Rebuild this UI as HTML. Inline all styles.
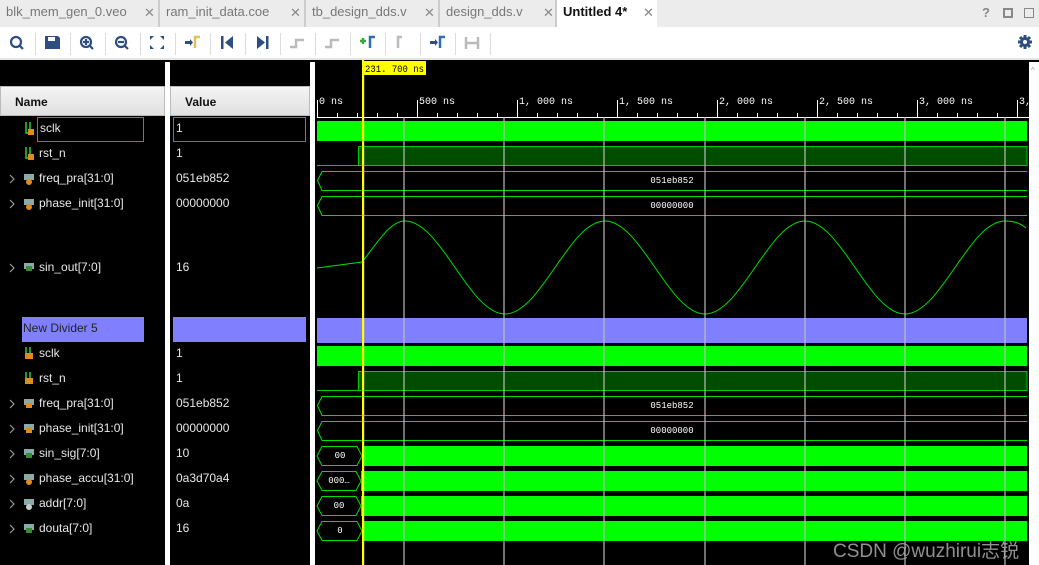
<!DOCTYPE html>
<html><head><meta charset="utf-8"><style>
*{margin:0;padding:0;box-sizing:border-box}
body{width:1039px;height:565px;overflow:hidden;background:#000;position:relative;font-family:"Liberation Sans",sans-serif}
.abs{position:absolute}
.tabs{left:0;top:0;width:1039px;height:27px;background:#ececec}
.tab{position:absolute;top:0;height:27px;font-size:13px;color:#777;padding:4px 0 0 6px}
.tab .x{position:absolute;top:5px;font-size:13px;color:#888}
.tb{left:0;top:27px;width:1039px;height:33px;background:#fff;border-bottom:2px solid #e4e4e4}
.sep{position:absolute;top:6px;width:1px;height:22px;background:#ddd}
.nm{position:absolute;font-size:12px;color:#e8e8e8;white-space:nowrap}
.hdr{position:absolute;top:86px;height:30px;background:linear-gradient(#f4f4f4,#e0e0e0);border:1px solid #bbb;font-size:12px;font-weight:bold;color:#111;padding:8px 0 0 14px}
</style></head><body>
<div class="abs tabs">
 <div class="tab" style="left:0;width:158px">blk_mem_gen_0.veo<span class="x" style="left:144px">✕</span></div>
 <div class="abs" style="left:158px;top:0;width:2px;height:27px;background:#ccc"></div>
 <div class="tab" style="left:160px;width:144px">ram_init_data.coe<span class="x" style="left:130px">✕</span></div>
 <div class="abs" style="left:304px;top:0;width:2px;height:27px;background:#ccc"></div>
 <div class="tab" style="left:306px;width:132px">tb_design_dds.v<span class="x" style="left:118px">✕</span></div>
 <div class="abs" style="left:438px;top:0;width:2px;height:27px;background:#ccc"></div>
 <div class="tab" style="left:440px;width:117px">design_dds.v<span class="x" style="left:103px">✕</span></div>
 <div class="abs" style="left:555px;top:0;width:2px;height:27px;background:#ccc"></div>
 <div class="tab" style="left:557px;width:100px;background:#fff;color:#111;font-weight:bold">Untitled 4*<span class="x" style="left:86px;font-weight:normal">✕</span></div>
 <div class="abs" style="left:982px;top:5px;font-size:13px;color:#888;font-weight:bold">?</div>
 <div class="abs" style="left:1003px;top:8px;width:10px;height:10px;border:2px solid #888"></div>
 <div class="abs" style="left:1024px;top:8px;width:10px;height:10px;border:1.5px solid #888"></div>
</div>
<div class="abs tb">
 <svg width="1039" height="33" style="position:absolute;left:0;top:0">
  <g fill="none" stroke="#2e4d80" stroke-width="2.2">
   <circle cx="16" cy="15" r="5"/><line x1="20" y1="19" x2="23" y2="22"/>
   <circle cx="86" cy="15" r="5"/><line x1="90" y1="19" x2="93" y2="22"/><line x1="83" y1="15" x2="89" y2="15"/><line x1="86" y1="12" x2="86" y2="18"/>
   <circle cx="121" cy="15" r="5"/><line x1="125" y1="19" x2="128" y2="22"/><line x1="118" y1="15" x2="124" y2="15"/>
  </g>
  <path d="M45 9h13l2 2v11h-15z" fill="#2e4d80"/><rect x="48" y="10" width="7" height="4" fill="#fff"/>
  <g fill="#2e4d80"><path d="M150 9h4l-4 4z"/><path d="M164 9h-4l4 4z"/><path d="M150 22h4l-4-4z"/><path d="M164 22h-4l4-4z"/></g>
  <path d="M185 14h6v3h-6z M190 12l3 3.5-3 3.5z" fill="#2e4d80"/><path d="M195 21v-11h5" stroke="#e0c060" stroke-width="2.5" fill="none"/>
  <rect x="221" y="9" width="2.5" height="13" fill="#2e4d80"/><path d="M233 9v13l-8-6.5z" fill="#2e4d80"/>
  <path d="M257 9v13l8-6.5z" fill="#2e4d80"/><rect x="266" y="9" width="2.5" height="13" fill="#2e4d80"/>
  <g stroke="#bbb" stroke-width="2.5" fill="none"><path d="M290 20h6v-7h8"/><path d="M325 20h6v-7h8"/><path d="M398 21v-11h4"/><path d="M466 10v12M478 10v12M466 16h12"/></g>
  <path d="M360 14h6M363 11v6" stroke="#3a3" stroke-width="2.4"/><path d="M370 21v-11h5" stroke="#2e6fb0" stroke-width="2.5" fill="none"/>
  <path d="M430 14h6v3h-6z M435 12l3 3.5-3 3.5z" fill="#2e4d80"/><path d="M440 21v-11h5" stroke="#2e6fb0" stroke-width="2.5" fill="none"/>
  <g stroke="#2e4d80" stroke-width="3"><line x1="1025" y1="8" x2="1025" y2="22"/><line x1="1018" y1="15" x2="1032" y2="15"/><line x1="1020" y1="10" x2="1030" y2="20"/><line x1="1030" y1="10" x2="1020" y2="20"/></g>
  <circle cx="1025" cy="15" r="5" fill="#2e4d80"/><circle cx="1025" cy="15" r="2" fill="#fff"/>
 </svg>
 <div class="sep" style="left:35px"></div><div class="sep" style="left:70px"></div><div class="sep" style="left:105px"></div><div class="sep" style="left:140px"></div><div class="sep" style="left:175px"></div><div class="sep" style="left:210px"></div><div class="sep" style="left:245px"></div><div class="sep" style="left:280px"></div><div class="sep" style="left:315px"></div><div class="sep" style="left:350px"></div><div class="sep" style="left:385px"></div><div class="sep" style="left:420px"></div><div class="sep" style="left:455px"></div><div class="sep" style="left:490px"></div>
</div>
<div class="abs" style="left:165px;top:62px;width:5px;height:503px;background:#fff"></div>
<div class="abs" style="left:310px;top:62px;width:5px;height:503px;background:#fff"></div>
<div class="abs" style="left:1029px;top:62px;width:10px;height:503px;background:#fff"></div>
<div class="abs" style="left:1031px;top:66px;font-size:8px;color:#999">^</div>
<div class="hdr" style="left:0;width:165px">Name</div>
<div class="hdr" style="left:170px;width:140px">Value</div>
<div class="abs" style="left:37px;top:117px;width:107px;height:25px;border:1px solid #4a7fae"></div>
<div class="abs" style="left:173px;top:117px;width:133px;height:25px;border:1px solid #4a7fae"></div>
<div class="abs" style="left:22px;top:317px;width:122px;height:25px;background:#8080ff"></div>
<div class="abs" style="left:173px;top:317px;width:133px;height:25px;background:#8080ff"></div>
<svg width="165" height="565" style="position:absolute;left:0;top:0">
 <g fill="none" stroke="#999" stroke-width="1.2">
  <path d="M10 175l4 4-4 4M10 200l4 4-4 4M10 264l4 4-4 4M10 400l4 4-4 4M10 425l4 4-4 4M10 450l4 4-4 4M10 475l4 4-4 4M10 500l4 4-4 4M10 525l4 4-4 4"/>
 </g>
 <g>
  <path d="M26 122v11h3M30 122v11" stroke="#3c3" stroke-width="1.5" fill="none"/><rect x="28" y="129" width="6" height="6" fill="#e08a20"/>
  <path d="M26 147v11h3M30 147v11" stroke="#3c3" stroke-width="1.5" fill="none"/><rect x="28" y="154" width="6" height="6" fill="#e08a20"/>
  <path d="M26 347v11h3M30 347v11" stroke="#3c3" stroke-width="1.5" fill="none"/><rect x="25" y="353" width="8" height="6" fill="#e08a20"/>
  <path d="M26 372v11h3M30 372v11" stroke="#3c3" stroke-width="1.5" fill="none"/><rect x="25" y="378" width="8" height="6" fill="#e08a20"/>
 </g>
 <g fill="#8aa">
  <rect x="24" y="174" width="10" height="6"/><rect x="24" y="199" width="10" height="6"/><rect x="24" y="263" width="10" height="6"/>
  <rect x="24" y="399" width="10" height="6"/><rect x="24" y="424" width="10" height="6"/><rect x="24" y="449" width="10" height="6"/><rect x="24" y="474" width="10" height="6"/><rect x="24" y="499" width="10" height="6"/><rect x="24" y="524" width="10" height="6"/>
 </g>
 <g fill="#e08a20"><circle cx="29" cy="182" r="3"/><circle cx="29" cy="207" r="3"/><rect x="26" y="403" width="6" height="5"/><rect x="26" y="428" width="6" height="5"/><circle cx="29" cy="482" r="3"/></g>
 <g fill="#3a8a3a"><rect x="26" y="266" width="6" height="5"/><rect x="26" y="453" width="6" height="5"/><rect x="26" y="528" width="6" height="5"/></g>
 <circle cx="29" cy="507" r="3" fill="#ccc"/>
</svg>
<div class="nm" style="left:40px;top:121px">sclk</div>
<div class="nm" style="left:39px;top:146px">rst_n</div>
<div class="nm" style="left:39px;top:171px">freq_pra[31:0]</div>
<div class="nm" style="left:39px;top:196px">phase_init[31:0]</div>
<div class="nm" style="left:39px;top:260px">sin_out[7:0]</div>
<div class="nm" style="left:23px;top:321px;color:#222">New Divider 5</div>
<div class="nm" style="left:39px;top:346px">sclk</div>
<div class="nm" style="left:39px;top:371px">rst_n</div>
<div class="nm" style="left:39px;top:396px">freq_pra[31:0]</div>
<div class="nm" style="left:39px;top:421px">phase_init[31:0]</div>
<div class="nm" style="left:39px;top:446px">sin_sig[7:0]</div>
<div class="nm" style="left:39px;top:471px">phase_accu[31:0]</div>
<div class="nm" style="left:39px;top:496px">addr[7:0]</div>
<div class="nm" style="left:39px;top:521px">douta[7:0]</div>
<div class="nm" style="left:176px;top:121px">1</div>
<div class="nm" style="left:176px;top:146px">1</div>
<div class="nm" style="left:176px;top:171px">051eb852</div>
<div class="nm" style="left:176px;top:196px">00000000</div>
<div class="nm" style="left:176px;top:260px">16</div>
<div class="nm" style="left:176px;top:346px">1</div>
<div class="nm" style="left:176px;top:371px">1</div>
<div class="nm" style="left:176px;top:396px">051eb852</div>
<div class="nm" style="left:176px;top:421px">00000000</div>
<div class="nm" style="left:176px;top:446px">10</div>
<div class="nm" style="left:176px;top:471px">0a3d70a4</div>
<div class="nm" style="left:176px;top:496px">0a</div>
<div class="nm" style="left:176px;top:521px">16</div>
<svg width="714" height="505" viewBox="315 60 714 505" style="position:absolute;left:315px;top:60px" font-family="Liberation Mono,monospace">
 <g stroke="#fff" stroke-width="1">
  <line x1="317" y1="117.5" x2="1029" y2="117.5"/>
  <path d="M317.5 100v17M417.5 100v17M517.5 100v17M617.5 100v17M717.5 100v17M817.5 100v17M917.5 100v17M1017.5 100v17"/>
  <path d="M337.5 113v4M357.5 113v4M377.5 113v4M397.5 113v4M437.5 113v4M457.5 113v4M477.5 113v4M497.5 113v4M537.5 113v4M557.5 113v4M577.5 113v4M597.5 113v4M637.5 113v4M657.5 113v4M677.5 113v4M697.5 113v4M737.5 113v4M757.5 113v4M777.5 113v4M797.5 113v4M837.5 113v4M857.5 113v4M877.5 113v4M897.5 113v4M937.5 113v4M957.5 113v4M977.5 113v4M997.5 113v4"/>
 </g>
 <g fill="#fff" font-size="10">
  <text x="319" y="104">0 ns</text><text x="419" y="104">500 ns</text><text x="519" y="104">1, 000 ns</text><text x="619" y="104">1, 500 ns</text><text x="719" y="104">2, 000 ns</text><text x="819" y="104">2, 500 ns</text><text x="919" y="104">3, 000 ns</text><text x="1019" y="104">3,</text>
 </g>
 <g fill="#00ff00">
  <rect x="317" y="121" width="710" height="20"/>
  <rect x="317" y="346" width="710" height="20"/>
  <rect x="362" y="446" width="665" height="20"/>
  <rect x="361" y="471" width="666" height="20"/>
  <rect x="361" y="496" width="666" height="20"/>
  <rect x="362" y="521" width="665" height="20"/>
 </g>
 <rect x="317" y="318" width="710" height="25" fill="#8080ff"/>
 <g fill="#004d00" stroke="#0c0" stroke-width="1">
  <path d="M317 165.5h41.5v-19h668.5v19h-668"/>
  <path d="M317 390.5h41.5v-19h668.5v19h-668"/>
 </g>
 <g fill="none" stroke="#00e000" stroke-width="1">
  <path d="M1027 171.5H322L317.5 180.5L322 190.5H1027"/>
  <path d="M1027 196.5H322L317.5 205.5L322 215.5H1027"/>
  <path d="M1027 396.5H322L317.5 405.5L322 415.5H1027"/>
  <path d="M1027 421.5H322L317.5 430.5L322 440.5H1027"/>
  <path d="M322 446.5h35l5 9.5-5 9.5h-35l-5-9.5z"/>
  <path d="M322 471.5h34l5 9.5-5 9.5h-34l-5-9.5z"/>
  <path d="M322 496.5h34l5 9.5-5 9.5h-34l-5-9.5z"/>
  <path d="M322 521.5h35l5 9.5-5 9.5h-35l-5-9.5z"/>
  <path d="M317 268L362 262C378 242 390 221 405 221C441 221 469 314 505 314C541 314 569 221 605 221C641 221 669 314 705 314C741 314 769 221 805 221C841 221 869 314 905 314C941 314 969 221 1005 221C1014 221 1020 223 1026 228"/>
 </g>
 <g fill="#fff" font-size="9" text-anchor="middle">
  <text x="672" y="183">051eb852</text><text x="672" y="208">00000000</text>
  <text x="672" y="408">051eb852</text><text x="672" y="433">00000000</text>
  <text x="340" y="458">00</text><text x="339" y="483">000…</text><text x="339" y="508">00</text><text x="340" y="533">0</text>
 </g>
 <g stroke="#bbb" stroke-width="1.2">
  <path d="M404 117v448M504 117v448M604 117v448M705 117v448M805 117v448M905 117v448M1005 117v448"/>
 </g>
 <rect x="362" y="60" width="2.2" height="505" fill="#ffff00"/>
 <rect x="363" y="61" width="63" height="14" fill="#ffff00"/>
 <text x="365" y="72" font-size="10" fill="#000" textLength="59" lengthAdjust="spacingAndGlyphs">231. 700 ns</text>
</svg>
<div class="abs" style="left:833px;top:536px;font-size:19px;color:#aaa;font-family:'Liberation Sans','Noto Sans CJK SC',sans-serif;opacity:.85">CSDN @wuzhirui志锐</div>
</body></html>
